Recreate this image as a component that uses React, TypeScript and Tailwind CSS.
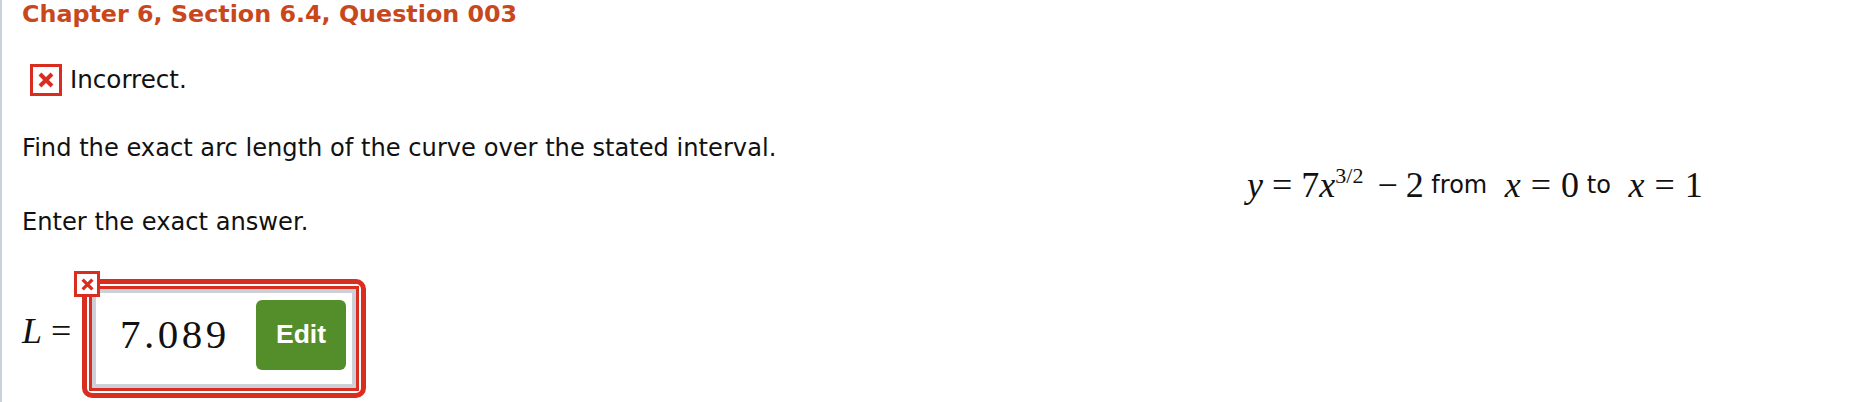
const sans = "font-['DejaVu_Sans',Verdana,sans-serif]";
const serif = "font-['Liberation_Serif',serif]";

function CrossBox({ className, icon }: { className: string; icon: string }) {
  return (
    <span className={`flex shrink-0 items-center justify-center border-[3px] border-[#d92d20] bg-white ${className}`}>
      <svg viewBox="0 0 16 16" className={icon}>
        <path d="M2 2 L14 14 M14 2 L2 14" stroke="#d92d20" strokeWidth="4" fill="none" />
      </svg>
    </span>
  );
}

export default function App() {
  return (
    <div className={`${sans} h-[402px] w-[1854px] overflow-hidden border-l-2 border-[#c9d1dd] bg-white pl-[20px] text-[#111]`}>
      {/* Title */}
      <h1 className="h-[26px] text-[23.8px] font-bold leading-[28px] text-[#c8481c]">
        Chapter 6, Section 6.4, Question 003
      </h1>

      {/* Feedback */}
      <div className="mt-[38px] flex h-[32px] items-center pl-[8px]">
        <CrossBox className="h-[32px] w-[32px]" icon="h-[16px] w-[16px]" />
        <span className="ml-[8px] text-[24.6px]">Incorrect.</span>
      </div>

      {/* Question + formula */}
      <div className="mt-[36px] flex h-[106px]">
        <div className="w-[1225px] shrink-0">
          <p className="h-[32px] text-[24.15px] leading-[32px]">
            Find the exact arc length of the curve over the stated interval.
          </p>
          <p className="mt-[42px] h-[32px] text-[24.15px] leading-[32px]">Enter the exact answer.</p>
        </div>
        <div className="mt-[34px] flex h-[38px] items-center whitespace-pre text-[36px]">
          <span className={serif}>
            <i>y</i> = 7<i>x</i>
            <sup className="-top-[14px] mr-[5px] text-[22px]">3/2</sup> −<span className="ml-[8px]">2</span>
          </span>
          <span className="text-[24px]"> from </span>
          <span className={`${serif} [word-spacing:1px]`}>
            {" "}
            <i>x</i> = 0
          </span>
          <span className="text-[24px]"> to </span>
          <span className={`${serif} [word-spacing:1px]`}>
            {" "}
            <i>x</i> = 1
          </span>
        </div>
      </div>

      {/* Answer */}
      <div className="mt-[41px] flex items-center">
        <span className={`${serif} mb-[16px] w-[60px] whitespace-pre text-[36px]`}>
          <i>L</i> =
        </span>
        <div className="relative rounded-[10px] border-[5px] border-[#d92d20] bg-white p-[2px]">
          <CrossBox className="absolute -left-[13px] -top-[13px] z-10 h-[26px] w-[26px]" icon="h-[13px] w-[13px]" />
          <div className="border-[3px] border-[#d92d20] bg-white">
            <div className="flex h-[99px] w-[264px] items-center border-4 border-[#cbd0d9] bg-white pb-[7px] pl-[24px]">
              <span className={`${serif} w-[136px] text-[41px] tracking-[3.5px]`}>7.089</span>
              <button className="flex h-[70px] w-[90px] items-center justify-center rounded-[6px] bg-[#548e2b] font-['Liberation_Sans',sans-serif] text-[26.5px] font-bold text-white">
                Edit
              </button>
            </div>
          </div>
        </div>
      </div>
    </div>
  );
}
